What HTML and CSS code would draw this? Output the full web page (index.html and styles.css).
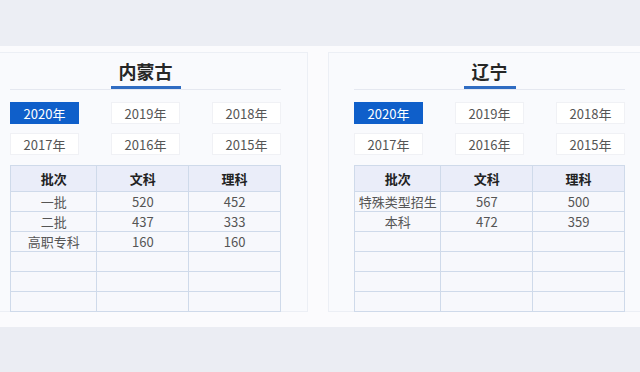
FILE: index.html
```html
<!DOCTYPE html>
<html lang="zh">
<head>
<meta charset="utf-8">
<link rel="stylesheet" href="styles.css">
</head>
<body>
<div class="top-band"></div>
<div class="main-band">
  <section class="panel panel-left">
    <div class="title"><h2>内蒙古</h2></div>
    <div class="years">
      <span class="year active">2020年</span>
      <span class="year">2019年</span>
      <span class="year">2018年</span>
      <span class="year">2017年</span>
      <span class="year">2016年</span>
      <span class="year">2015年</span>
    </div>
    <table class="scores">
      <colgroup><col class="c1"><col class="c2"><col class="c3"></colgroup>
      <thead><tr><th>批次</th><th>文科</th><th>理科</th></tr></thead>
      <tbody>
        <tr><td>一批</td><td>520</td><td>452</td></tr>
        <tr><td>二批</td><td>437</td><td>333</td></tr>
        <tr><td>高职专科</td><td>160</td><td>160</td></tr>
        <tr><td></td><td></td><td></td></tr>
        <tr><td></td><td></td><td></td></tr>
        <tr><td></td><td></td><td></td></tr>
      </tbody>
    </table>
  </section>
  <section class="panel panel-right">
    <div class="title"><h2>辽宁</h2></div>
    <div class="years">
      <span class="year active">2020年</span>
      <span class="year">2019年</span>
      <span class="year">2018年</span>
      <span class="year">2017年</span>
      <span class="year">2016年</span>
      <span class="year">2015年</span>
    </div>
    <table class="scores">
      <colgroup><col class="c1"><col class="c2"><col class="c3"></colgroup>
      <thead><tr><th>批次</th><th>文科</th><th>理科</th></tr></thead>
      <tbody>
        <tr><td>特殊类型招生</td><td>567</td><td>500</td></tr>
        <tr><td>本科</td><td>472</td><td>359</td></tr>
        <tr><td></td><td></td><td></td></tr>
        <tr><td></td><td></td><td></td></tr>
        <tr><td></td><td></td><td></td></tr>
        <tr><td></td><td></td><td></td></tr>
      </tbody>
    </table>
  </section>
</div>
</body>
</html>
```
FILE: styles.css
```css
* { box-sizing: border-box; }
html, body {
  margin: 0;
  padding: 0;
  width: 640px;
  height: 372px;
  overflow: hidden;
  background: #ebedf3;
  font-family: "Noto Sans CJK SC", "Noto Sans", sans-serif;
}
.top-band {
  height: 46px;
  background: #eceef4;
}
.main-band {
  height: 281px;
  background: #fbfbfd;
  display: flex;
  gap: 20px;
  padding-top: 6px;
}
.panel {
  height: 260px;
  background: #f9fafd;
  border: 1px solid #eceff5;
  display: flex;
  flex-direction: column;
}
.panel-left {
  width: 308px;
  border-left: none;
  padding: 0 26px 0 10px;
}
.panel-right {
  flex: 1;
  border-right: none;
  padding: 0 15px 0 25px;
}
.title {
  text-align: center;
  border-bottom: 1px solid #e5e8f0;
  padding-top: 4px;
  height: 37px;
}
.title h2 {
  display: inline-block;
  margin: 0;
  font-size: 18px;
  font-weight: 700;
  line-height: 28px;
  color: #262626;
  padding: 0 8px 1px;
  border-bottom: 3px solid #2f6cc2;
}
.years {
  display: grid;
  grid-template-columns: 69px 69px 69px;
  justify-content: space-between;
  row-gap: 9px;
  margin-top: 12px;
}
.year {
  height: 22px;
  line-height: 22px;
  text-align: center;
  font-size: 13px;
  color: #555;
  background: #fff;
  border: 1px solid #f0f1f5;
}
.year.active {
  background: #0f5fca;
  border-color: #0f5fca;
  color: #fff;
}
.scores {
  margin-top: 10px;
  width: 100%;
  border-collapse: collapse;
  table-layout: fixed;
  border: 1px solid #c3d0e2;
  background: #f7f8fc;
}
.c1 { width: 32%; }
.c2 { width: 34%; }
.c3 { width: 34%; }
.scores th, .scores td {
  border: 1px solid #cfdaea;
  text-align: center;
  padding: 0;
  font-size: 13px;
  white-space: nowrap;
  overflow: hidden;
}
.scores th {
  height: 26px;
  background: #eaedf9;
  color: #222;
  font-weight: 700;
}
.scores td {
  height: 20px;
  line-height: 18px;
  color: #555;
}
```
